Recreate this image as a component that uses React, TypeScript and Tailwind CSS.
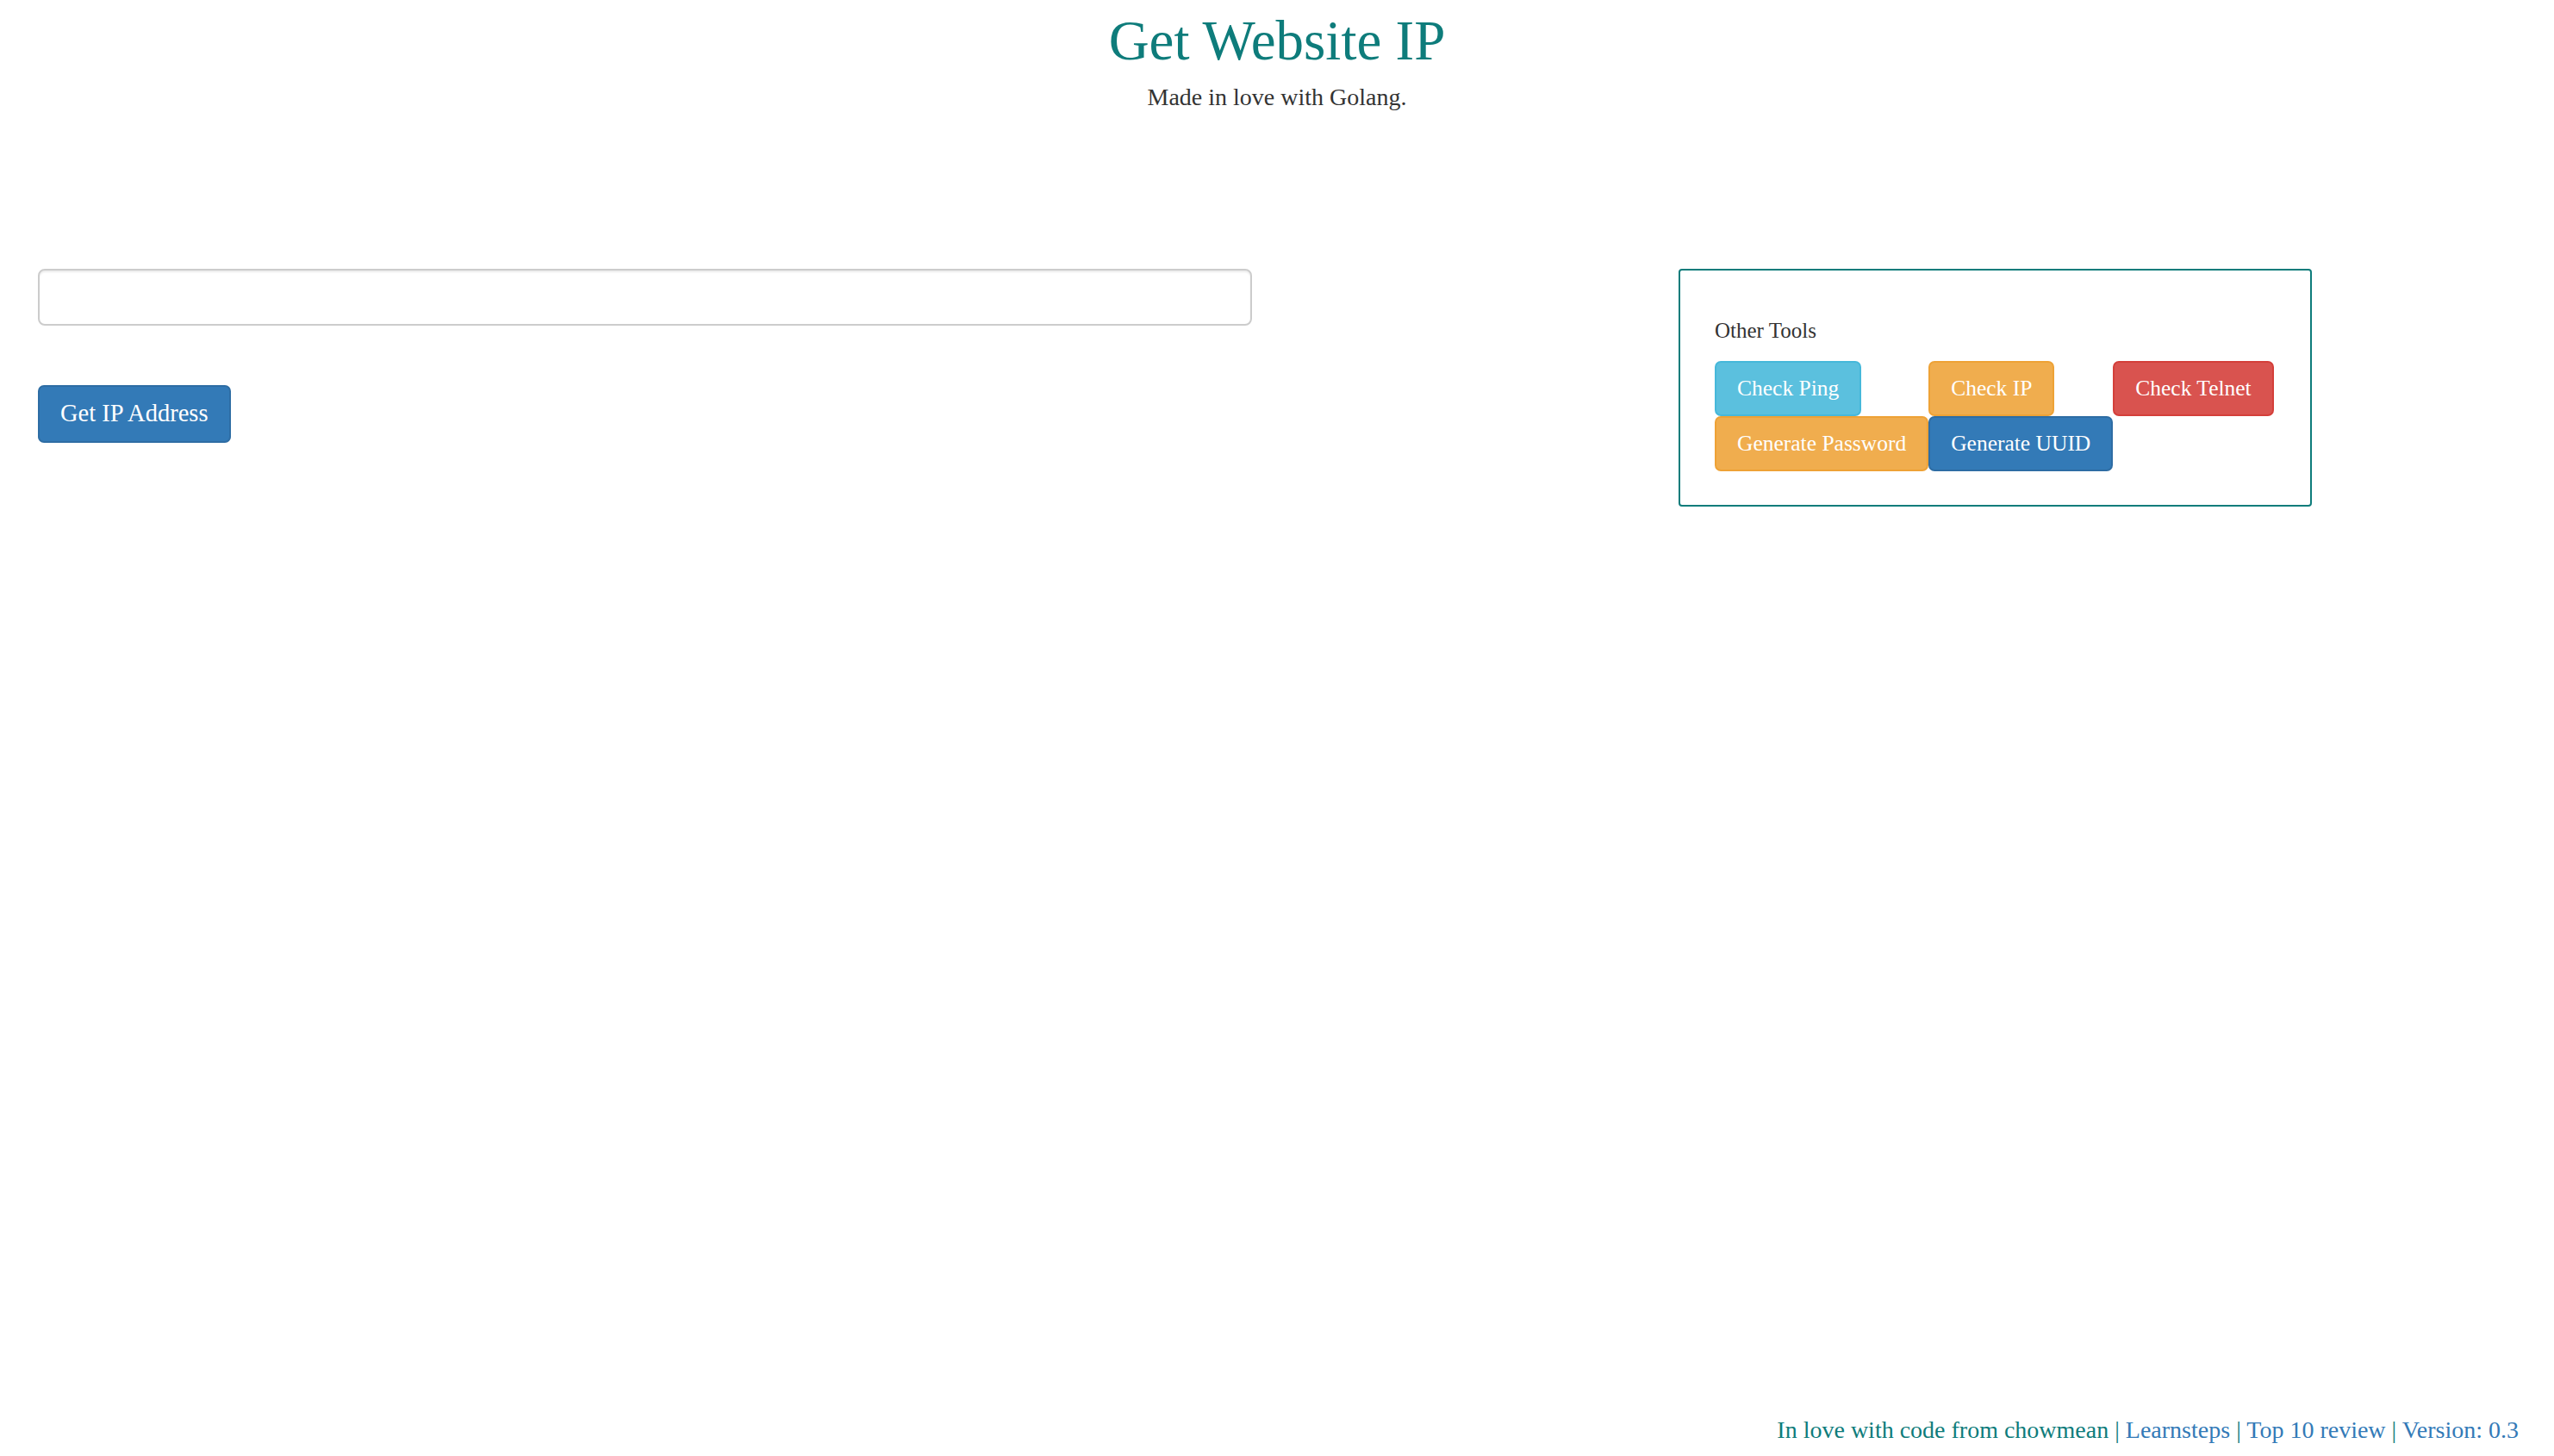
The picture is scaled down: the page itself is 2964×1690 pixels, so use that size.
const TOOLS = [
  { label: "Check Ping", tone: "bg-[#5bc0de] border-[#46b8da]" },
  { label: "Check IP", tone: "bg-[#f0ad4e] border-[#eea236]" },
  { label: "Check Telnet", tone: "bg-[#d9534f] border-[#d43f3a]" },
  { label: "Generate Password", tone: "bg-[#f0ad4e] border-[#eea236]" },
  { label: "Generate UUID", tone: "bg-[#337ab7] border-[#2e6da4]" },
];

function ToolButton({ label, tone }: { label: string; tone: string }) {
  return (
    <button
      type="button"
      className={`h-[64px] whitespace-nowrap rounded-[7px] border-2 px-[24px] text-[25.5px] leading-none text-white ${tone}`}
    >
      {label}
    </button>
  );
}

export default function App() {
  return (
    <div className="flex min-h-screen flex-col bg-white font-['Liberation_Serif','Times_New_Roman',serif] text-[#333]">
      <header className="pt-[10px] text-center">
        <h1 className="text-[65px] leading-[75px] text-[#0e7c7b]">Get Website IP</h1>
        <p className="mt-[9px] text-[28px] leading-[38px]">Made in love with Golang.</p>
      </header>

      <main className="mt-[180px] flex items-start pl-[44px]">
        <div className="w-[1409px] shrink-0">
          <input
            type="text"
            className="block h-[66px] w-full rounded-[8px] border-2 border-[#ccc] px-[22px] text-[28px] shadow-[inset_0_2px_2px_rgba(0,0,0,0.075)] outline-none"
          />
          <button
            type="button"
            className="mt-[69px] h-[67px] whitespace-nowrap rounded-[7px] border-2 border-[#2e6da4] bg-[#337ab7] px-[24px] text-[28.5px] leading-none text-white"
          >
            Get IP Address
          </button>
        </div>

        <section className="ml-[495px] w-[735px] shrink-0 rounded-[4px] border-2 border-[#0e7c7b] pt-[52px] pr-[38px] pb-[39px] pl-[40px]">
          <p className="mb-[17px] text-[25px] leading-[36px]">Other Tools</p>
          <div className="grid grid-cols-[auto_auto_auto] justify-start justify-items-start">
            {TOOLS.map((t) => (
              <ToolButton key={t.label} label={t.label} tone={t.tone} />
            ))}
          </div>
        </section>
      </main>

      <footer className="mt-auto pr-[41px] pb-[10px] text-right text-[28px] leading-[40px] text-[#0e7c7b]">
        In love with code from chowmean |{" "}
        <a href="#" className="text-[#337ab7]">Learnsteps</a> |{" "}
        <a href="#" className="text-[#337ab7]">Top 10 review</a> |{" "}
        <span className="text-[#337ab7]">Version: 0.3</span>
      </footer>
    </div>
  );
}
